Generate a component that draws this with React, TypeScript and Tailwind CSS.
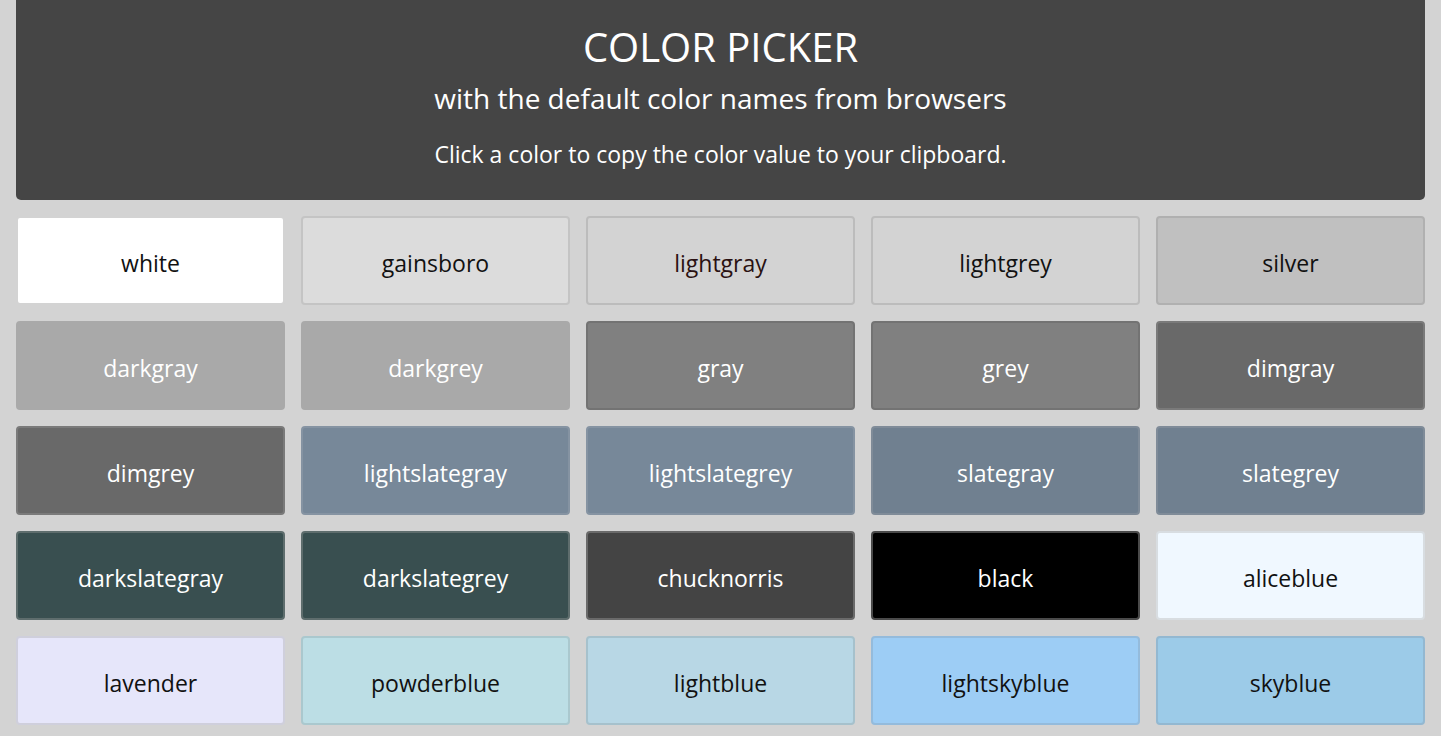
const colors = [
  { name: 'white', bg: 'bg-[#ffffff]', border: 'border-[#d3d3d3]', text: 'text-[#111]' },
  { name: 'gainsboro', bg: 'bg-[#dcdcdc]', border: 'border-[#c4c4c4]', text: 'text-[#111]' },
  { name: 'lightgray', bg: 'bg-[#d3d3d3]', border: 'border-[#bcbcbc]', text: 'text-[#2a1111]' },
  { name: 'lightgrey', bg: 'bg-[#d3d3d3]', border: 'border-[#bcbcbc]', text: 'text-[#111]' },
  { name: 'silver', bg: 'bg-[#c0c0c0]', border: 'border-[#b0b0b0]', text: 'text-[#111]' },
  { name: 'darkgray', bg: 'bg-[#a9a9a9]', border: 'border-[#a9a9a9]', text: 'text-white' },
  { name: 'darkgrey', bg: 'bg-[#a9a9a9]', border: 'border-[#a9a9a9]', text: 'text-white' },
  { name: 'gray', bg: 'bg-[#808080]', border: 'border-[#737373]', text: 'text-white' },
  { name: 'grey', bg: 'bg-[#808080]', border: 'border-[#737373]', text: 'text-white' },
  { name: 'dimgray', bg: 'bg-[#696969]', border: 'border-[#7a7a7a]', text: 'text-white' },
  { name: 'dimgrey', bg: 'bg-[#696969]', border: 'border-[#7a7a7a]', text: 'text-white' },
  { name: 'lightslategray', bg: 'bg-[#778899]', border: 'border-[#8593a2]', text: 'text-white' },
  { name: 'lightslategrey', bg: 'bg-[#778899]', border: 'border-[#8593a2]', text: 'text-white' },
  { name: 'slategray', bg: 'bg-[#708090]', border: 'border-[#7f8b98]', text: 'text-white' },
  { name: 'slategrey', bg: 'bg-[#708090]', border: 'border-[#7f8b98]', text: 'text-white' },
  { name: 'darkslategray', bg: 'bg-[#394f50]', border: 'border-[#5e6d6d]', text: 'text-white' },
  { name: 'darkslategrey', bg: 'bg-[#394f50]', border: 'border-[#5e6d6d]', text: 'text-white' },
  { name: 'chucknorris', bg: 'bg-[#444444]', border: 'border-[#6a6a6a]', text: 'text-white' },
  { name: 'black', bg: 'bg-[#000000]', border: 'border-[#4a4a4a]', text: 'text-white' },
  { name: 'aliceblue', bg: 'bg-[#f0f8ff]', border: 'border-[#d8dde1]', text: 'text-[#111]' },
  { name: 'lavender', bg: 'bg-[#e6e6fa]', border: 'border-[#cfcfdc]', text: 'text-[#111]' },
  { name: 'powderblue', bg: 'bg-[#bcdee5]', border: 'border-[#aac8ce]', text: 'text-[#111]' },
  { name: 'lightblue', bg: 'bg-[#b8d7e5]', border: 'border-[#a6c1cc]', text: 'text-[#111]' },
  { name: 'lightskyblue', bg: 'bg-[#9dcdf5]', border: 'border-[#94bbdc]', text: 'text-[#111]' },
  { name: 'skyblue', bg: 'bg-[#9ccbe8]', border: 'border-[#93b8d1]', text: 'text-[#111]' },
];

export default function App() {
  return (
    <div className="min-h-screen bg-[#d3d3d3] px-4 font-['Open_Sans',sans-serif]">
      <header className="flex h-[200px] flex-col items-center rounded-b-[5px] bg-[#454545] text-white">
        <h1 className="mt-[22px] text-[40px] leading-[50px]">COLOR PICKER</h1>
        <h2 className="mt-[6px] text-[28px] leading-[40px]">with the default color names from browsers</h2>
        <p className="mt-[20px] text-[23px] leading-[32px]">Click a color to copy the color value to your clipboard.</p>
      </header>

      <div className="mt-4 grid grid-cols-5 gap-4">
        {colors.map((c) => (
          <button
            key={c.name}
            type="button"
            className={`flex h-[89px] items-center justify-center rounded-[4px] border-2 pt-[5px] text-[23px] ${c.bg} ${c.border} ${c.text}`}
          >
            {c.name}
          </button>
        ))}
      </div>
    </div>
  );
}
